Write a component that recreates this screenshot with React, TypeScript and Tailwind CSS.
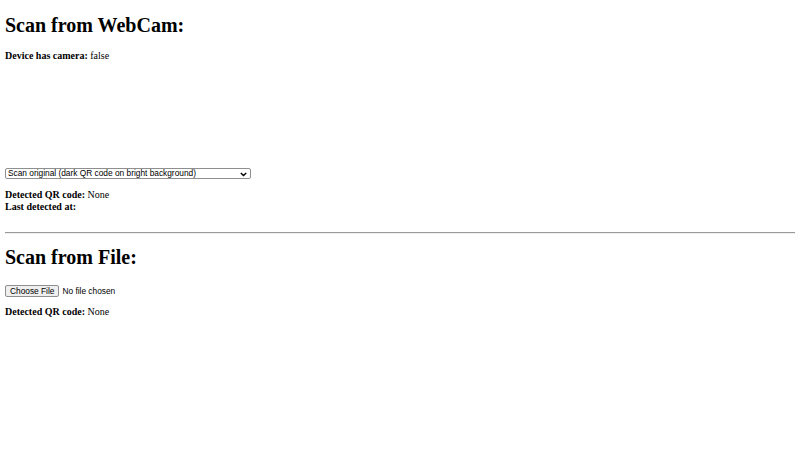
import { useState } from 'react'

const serif = "font-['Liberation_Serif','Times_New_Roman',serif]"
const sans = "font-['Liberation_Sans',Arial,sans-serif]"

function Field({ label, value }: { label: string; value: string }) {
  return (
    <div className="text-[10px] leading-[11.5px]">
      <b>{label}</b> <span>{value}</span>
    </div>
  )
}

export default function App() {
  const [mode, setMode] = useState('original')

  return (
    <div className={`${serif} min-h-[450px] bg-white px-[5px] text-black`}>
      <h1 className="pt-[13.6px] text-[20px] font-bold leading-[23px]">Scan from WebCam:</h1>
      <div className="mt-[13.6px]">
        <Field label="Device has camera:" value="false" />
      </div>

      {/* video area, empty since no camera */}
      <div className="h-[106.5px]" />

      <div className="relative w-[246px]">
        <select
          value={mode}
          onChange={(e) => setMode(e.target.value)}
          className={`${sans} block h-[11px] w-full appearance-none rounded-[2px] border border-[#8f8f8f] bg-white pl-[2px] text-[8.33px] leading-[9px] text-black`}
        >
          <option value="original">Scan original (dark QR code on bright background)</option>
          <option value="invert">Scan with inverted colors (bright QR code on dark background)</option>
          <option value="both">Scan both</option>
        </select>
        <svg
          className="pointer-events-none absolute right-[4px] top-[3.5px]"
          width="7"
          height="5"
          viewBox="0 0 7 5"
        >
          <path d="M0.8 0.9 L3.5 3.6 L6.2 0.9" fill="none" stroke="#000" strokeWidth="1.4" />
        </svg>
      </div>

      <div className="mt-[9.9px]">
        <Field label="Detected QR code:" value="None" />
        <Field label="Last detected at:" value="" />
      </div>

      <hr className="mt-[19.8px] border-t border-b border-t-[#9a9a9a] border-b-[#eeeeee]" />

      <h1 className="mt-[12.3px] text-[20px] font-bold leading-[23px]">Scan from File:</h1>

      <div className={`${sans} mt-[15.7px] flex items-center gap-[3px] text-[8.33px]`}>
        <button className="h-[12.5px] rounded-[2px] border border-[#8f8f8f] bg-[#efefef] px-[4px] leading-[10px]">
          Choose File
        </button>
        <span>No file chosen</span>
      </div>

      <div className="mt-[8.7px]">
        <Field label="Detected QR code:" value="None" />
      </div>
    </div>
  )
}
